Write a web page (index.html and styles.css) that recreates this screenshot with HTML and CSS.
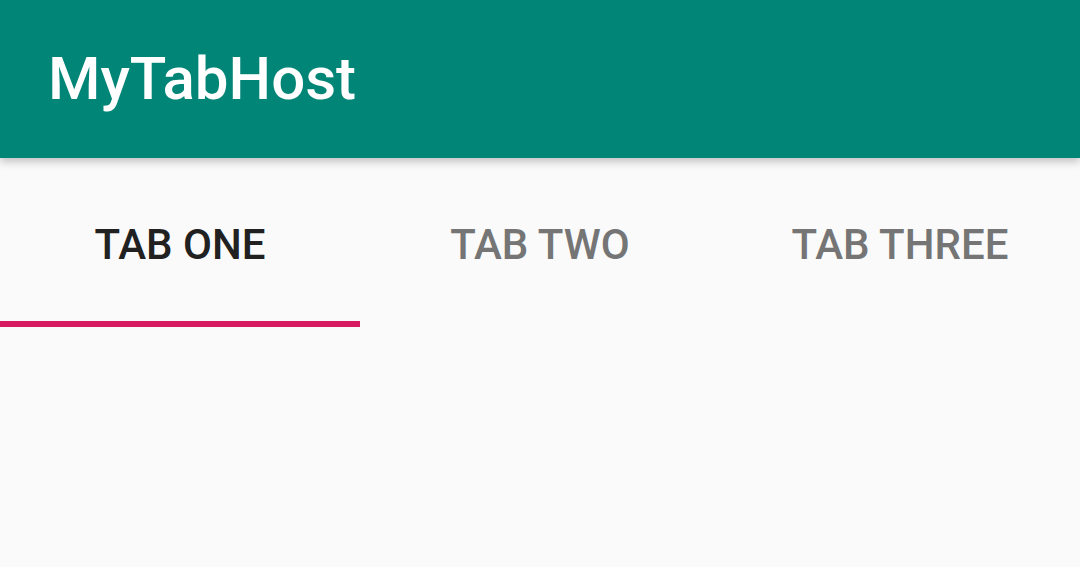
FILE: index.html
```html
<!DOCTYPE html>
<html>
<head>
<meta charset="utf-8">
<link rel="stylesheet" href="styles.css">
</head>
<body>
<header class="appbar"><h1 class="title">MyTabHost</h1></header>
<nav class="tabs">
  <div class="tab active"><span>TAB ONE</span></div>
  <div class="tab"><span>TAB TWO</span></div>
  <div class="tab"><span>TAB THREE</span></div>
</nav>
<main class="content"></main>
</body>
</html>
```
FILE: styles.css
```css
html, body { margin: 0; padding: 0; }
body {
  width: 1080px;
  height: 567px;
  overflow: hidden;
  background: #fafafa;
  font-family: Roboto, "Noto Sans", sans-serif;
}
.appbar {
  position: relative;
  z-index: 2;
  height: 158px;
  background: #008577;
  display: flex;
  align-items: center;
  padding-left: 48px;
  box-shadow: 0 4px 8px rgba(0,0,0,0.22);
}
.title {
  margin: 0;
  color: #fff;
  font-size: 60px;
  font-weight: 500;
  line-height: 1;
}
.tabs {
  display: grid;
  grid-template-columns: repeat(3, 1fr);
  height: 169px;
}
.tab {
  display: flex;
  align-items: center;
  justify-content: center;
  padding-top: 10px;
  box-sizing: border-box;
  font-size: 42px;
  font-weight: 500;
  color: #757575;
  border-bottom: 6px solid transparent;
}
.tab.active {
  color: #212121;
  border-bottom-color: #d81b60;
}
```
